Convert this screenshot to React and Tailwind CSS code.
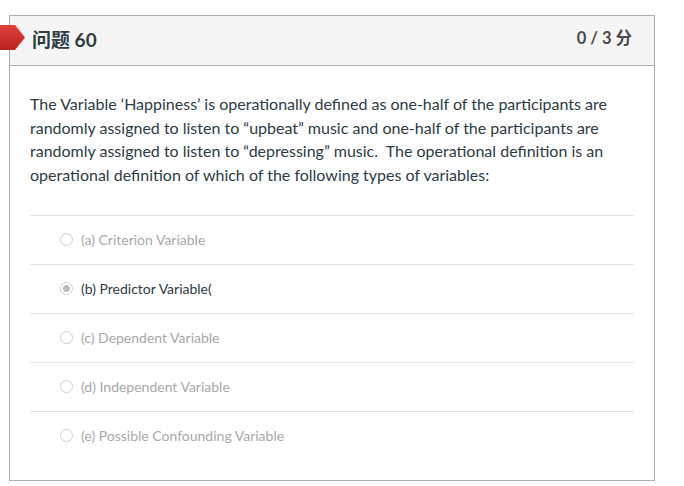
import React from 'react';

const options = [
    { label: '(a) Criterion Variable', selected: false },
    { label: '(b) Predictor Variable(', selected: true },
    { label: '(c) Dependent Variable', selected: false },
    { label: '(d) Independent Variable', selected: false },
    { label: '(e) Possible Confounding Variable', selected: false },
];

function Radio({ checked }) {
    return (
        <span className="w-[13px] h-[13px] rounded-full border border-[#cfcfcf] bg-white flex items-center justify-center shrink-0">
            {checked && <span className="w-[7px] h-[7px] rounded-full bg-[#bdbdbd]" />}
        </span>
    );
}

export default function App() {
    return (
        <div
            className="pt-[15px] pl-[9px] bg-white min-h-screen"
            style={{ fontFamily: 'Lato, "Noto Sans CJK SC", sans-serif' }}
        >
            <div className="relative w-[646px] h-[466px] border border-[#adadad] bg-white">
                {/* Ribbon */}
                <svg className="absolute left-[-10px] top-[9px]" width="26" height="26" viewBox="0 0 26 26">
                    <defs>
                        <linearGradient id="rib" x1="0" y1="0" x2="0" y2="1">
                            <stop offset="0" stopColor="#e0413c" />
                            <stop offset="1" stopColor="#b8221f" />
                        </linearGradient>
                    </defs>
                    <polygon points="0,0 15,0 25,12.5 15,25 0,25" fill="url(#rib)" />
                </svg>

                {/* Header */}
                <div className="h-[50px] bg-[#f5f5f5] border-b border-[#adadad] flex justify-between pl-[22px] pr-[22px]">
                    <div className="flex items-center text-[19px] font-bold text-[#2d3b45]">问题 60</div>
                    <div className="pt-[10px] text-[16.5px] leading-[24px] font-bold text-[#4a4a4a]">0 / 3 分</div>
                </div>

                {/* Body */}
                <div className="px-[20px] pt-[26px]">
                    <p className="text-[16px] leading-[23.7px] text-[#2d3b45]">
                        The Variable ‘Happiness’ is operationally defined as one-half of the participants are randomly
                        assigned to listen to “upbeat” music and one-half of the participants are randomly assigned to
                        listen to “depressing” music.&nbsp; The operational definition is an operational definition of
                        which of the following types of variables:
                    </p>

                    <div className="mt-[28px]">
                        {options.map((o) => (
                            <div key={o.label} className="h-[49px] border-t border-[#e3e3e3] flex items-center pl-[30px] gap-[8px]">
                                <Radio checked={o.selected} />
                                <span className={`text-[14px] ${o.selected ? 'text-[#2d3b45]' : 'text-[#a8a8a8]'}`}>
                                    {o.label}
                                </span>
                            </div>
                        ))}
                    </div>
                </div>
            </div>
        </div>
    );
}
